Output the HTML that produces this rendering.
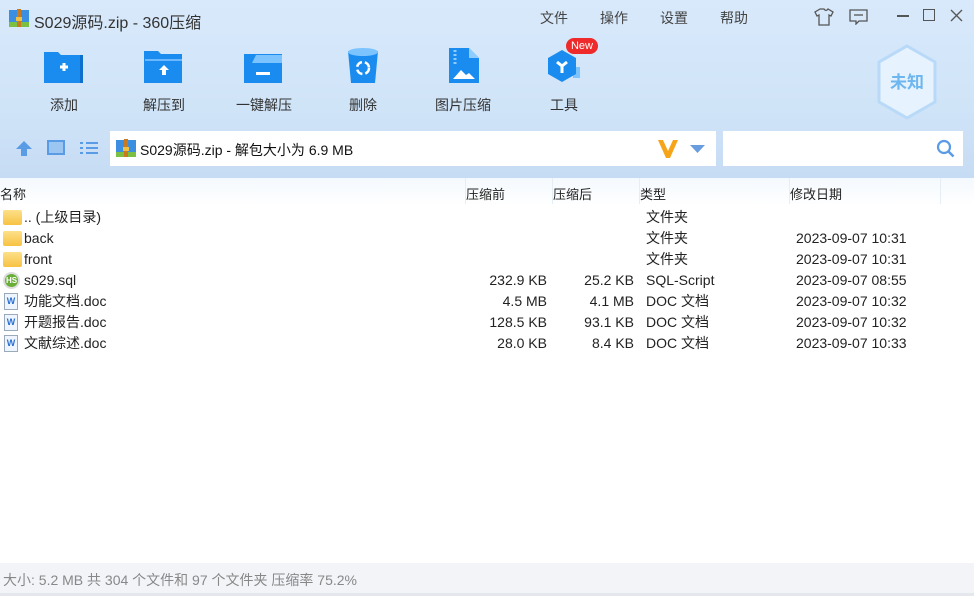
<!DOCTYPE html>
<html><head><meta charset="utf-8"><style>
*{margin:0;padding:0;box-sizing:border-box}
body{width:974px;height:596px;overflow:hidden;font-family:"Liberation Sans","Noto Sans CJK SC",sans-serif;background:#fff;position:relative;font-size:14px;color:#222}
.top{position:absolute;left:0;top:0;width:974px;height:178px;background:linear-gradient(180deg,#d8e9fb 0%,#d0e4f8 60%,#c6dcf4 100%)}
.a{position:absolute;white-space:nowrap}
.tb{position:absolute;top:47px;width:80px;text-align:center;font-size:14px;color:#333}
.tb svg{display:block;margin:0 auto 12px}
.menu{top:8px;font-size:14px;color:#444}
.row{position:absolute;left:0;height:21px;width:974px;font-size:14px;line-height:21px}
.row span{position:absolute;white-space:nowrap}
.r{text-align:right}
</style></head><body>
<div class="top"></div>
<svg class="a" style="left:9px;top:8px" width="20" height="20" viewBox="0 0 20 20"><rect x="0" y="2" width="20" height="16" fill="#3b8ee0"/><rect x="0" y="14" width="20" height="5" fill="#7bc043"/><rect x="8" y="1" width="4" height="18" fill="#c77a1e"/><rect x="7" y="9" width="6" height="4" fill="#f0c040"/></svg>
<div class="a" style="left:34px;top:9px;font-size:16px;color:#333">S029源码.zip - 360压缩</div>
<div class="a menu" style="left:540px">文件</div>
<div class="a menu" style="left:600px">操作</div>
<div class="a menu" style="left:660px">设置</div>
<div class="a menu" style="left:720px">帮助</div>
<svg class="a" style="left:814px;top:8px" width="20" height="18" viewBox="0 0 20 18"><path d="M6 1L1 4l2 4 2-1v10h10V7l2 1 2-4-5-3q-2 3-4 0z" fill="none" stroke="#555" stroke-width="1.3"/></svg>
<svg class="a" style="left:849px;top:9px" width="20" height="16" viewBox="0 0 20 16"><path d="M1 1h17v11H10l-3 3v-3H1z" fill="none" stroke="#555" stroke-width="1.3"/><path d="M5 6h9" stroke="#555" stroke-width="1.3"/></svg>
<div class="a" style="left:897px;top:15px;width:12px;height:1.5px;background:#555"></div>
<div class="a" style="left:923px;top:9px;width:12px;height:12px;border:1.5px solid #555"></div>
<svg class="a" style="left:950px;top:9px" width="13" height="13"><path d="M1 1l11 11M12 1L1 12" stroke="#555" stroke-width="1.3"/></svg>
<div class="tb" style="left:24px"><svg width="40" height="36" viewBox="0 0 40 36"><path d="M0 5h14l3 3h21v28H0z" fill="#1a8cf0"/><rect x="36" y="8" width="3" height="28" fill="#0f6fcc"/><path d="M16 20h8M20 16v8" stroke="#fff" stroke-width="3"/></svg>添加</div>
<div class="tb" style="left:124px"><svg width="40" height="36" viewBox="0 0 40 36"><path d="M0 4h14l3 3h21v29H0z" fill="#1a8cf0"/><path d="M1 13h37" stroke="#6bb8ff" stroke-width="2"/><path d="M20 18l-5 5h3v5h4v-5h3z" fill="#fff"/></svg>解压到</div>
<div class="tb" style="left:224px"><svg width="40" height="36" viewBox="0 0 40 36"><rect x="0" y="7" width="38" height="29" fill="#1a8cf0"/><path d="M12 8h26v8H8z" fill="#7cc4ff"/><rect x="12" y="25" width="14" height="3" fill="#fff"/></svg>一键解压</div>
<div class="tb" style="left:323px"><svg width="40" height="36" viewBox="0 0 40 36"><path d="M5 4h30l-3 32H8z" fill="#1a8cf0"/><ellipse cx="20" cy="5" rx="15" ry="4" fill="#7cc4ff"/><circle cx="20" cy="21" r="6" fill="none" stroke="#fff" stroke-width="2.5" stroke-dasharray="7 3"/></svg>删除</div>
<div class="tb" style="left:423px"><svg width="40" height="36" viewBox="0 0 40 36"><path d="M6 1h20l10 10v25H6z" fill="#1a8cf0"/><path d="M26 1v10h10z" fill="#8fccff"/><path d="M12 3v14" stroke="#8fccff" stroke-width="3" stroke-dasharray="2 2"/><path d="M10 32l8-9 5 5 3-2 6 6z" fill="#fff"/></svg>图片压缩</div>
<div class="tb" style="left:524px"><svg width="40" height="36" viewBox="0 0 40 36"><rect x="29" y="20" width="7" height="11" fill="#7cc4ff"/><path d="M18 3l14 8v16l-14 8-14-8V11z" fill="#1a8cf0"/><path d="M13 15l5 4 5-4M18 19v7" stroke="#fff" stroke-width="3" fill="none"/></svg>工具</div>
<div class="a" style="left:566px;top:38px;width:32px;height:16px;background:#ee2a2a;border-radius:8px;color:#fff;font-size:11px;line-height:16px;text-align:center">New</div>
<svg class="a" style="left:876px;top:44px" width="62" height="76" viewBox="0 0 62 76"><path d="M31 2l28 16v40L31 74 3 58V18z" fill="#e6f2fd" stroke="#b8daf8" stroke-width="3"/><text x="31" y="44" text-anchor="middle" font-size="17" font-weight="bold" fill="#6db6f0" font-family="Noto Sans CJK SC,sans-serif">未知</text></svg>
<svg class="a" style="left:15px;top:140px" width="18" height="16"><path d="M9 1L1 9h5v7h6V9h5z" fill="#5a9be6"/></svg>
<div class="a" style="left:47px;top:140px;width:18px;height:15px;border:2px solid #5a9be6;background:#9cc6f2"></div>
<svg class="a" style="left:80px;top:141px" width="18" height="14"><path d="M0 2h3M6 2h12M0 7h3M6 7h12M0 12h3M6 12h12" stroke="#5a9be6" stroke-width="2"/></svg>
<div class="a" style="left:110px;top:131px;width:606px;height:35px;background:#fff"></div>
<svg class="a" style="left:116px;top:138px" width="20" height="20" viewBox="0 0 20 20"><rect x="0" y="2" width="20" height="16" fill="#3b8ee0"/><rect x="0" y="14" width="20" height="5" fill="#7bc043"/><rect x="8" y="1" width="4" height="18" fill="#c77a1e"/><rect x="7" y="9" width="6" height="4" fill="#f0c040"/></svg>
<div class="a" style="left:140px;top:140px;font-size:14px;color:#111">S029源码.zip - 解包大小为 6.9 MB</div>
<svg class="a" style="left:657px;top:139px" width="22" height="20"><path d="M1 1h5l5 11 5-11h5l-8 18h-4z" fill="#f6a51a"/></svg>
<svg class="a" style="left:690px;top:145px" width="15" height="8"><path d="M0 0h15l-7.5 8z" fill="#6a9de0"/></svg>
<div class="a" style="left:723px;top:131px;width:240px;height:35px;background:#fff"></div>
<svg class="a" style="left:936px;top:139px" width="20" height="20"><circle cx="8" cy="8" r="6" fill="none" stroke="#5a9be6" stroke-width="2.2"/><path d="M12.5 12.5l5 5" stroke="#5a9be6" stroke-width="2.5"/></svg>
<div class="a" style="left:0;top:178px;width:974px;height:28px;background:linear-gradient(180deg,#f4f9fe,#fff)"></div>
<div class="a" style="left:0;top:184px;font-size:13px">名称</div>
<div class="a" style="left:466px;top:184px;font-size:13px">压缩前</div>
<div class="a" style="left:553px;top:184px;font-size:13px">压缩后</div>
<div class="a" style="left:640px;top:184px;font-size:13px">类型</div>
<div class="a" style="left:790px;top:184px;font-size:13px">修改日期</div>
<div class="a" style="left:465px;top:178px;width:1px;height:26px;background:#e6edf5"></div>
<div class="a" style="left:552px;top:178px;width:1px;height:26px;background:#e6edf5"></div>
<div class="a" style="left:639px;top:178px;width:1px;height:26px;background:#e6edf5"></div>
<div class="a" style="left:789px;top:178px;width:1px;height:26px;background:#e6edf5"></div>
<div class="a" style="left:940px;top:178px;width:1px;height:26px;background:#e6edf5"></div>
<div class="row" style="top:207px"><span style="left:3px;top:3px;width:19px;height:15px;background:linear-gradient(#fde08a,#f6c243);border-radius:2px"></span><span style="left:24px">.. (上级目录)</span><span style="left:646px">文件夹</span></div>
<div class="row" style="top:228px"><span style="left:3px;top:3px;width:19px;height:15px;background:linear-gradient(#fde08a,#f6c243);border-radius:2px"></span><span style="left:24px">back</span><span style="left:646px">文件夹</span><span style="left:796px">2023-09-07 10:31</span></div>
<div class="row" style="top:249px"><span style="left:3px;top:3px;width:19px;height:15px;background:linear-gradient(#fde08a,#f6c243);border-radius:2px"></span><span style="left:24px">front</span><span style="left:646px">文件夹</span><span style="left:796px">2023-09-07 10:31</span></div>
<div class="row" style="top:270px"><span style="left:3px;top:2px;width:17px;height:17px;border-radius:50%;background:#6aae3a;color:#fff;font-size:8px;line-height:13px;text-align:center;font-weight:bold;border:2px solid #ddd">HS</span><span style="left:24px">s029.sql</span><span class="r" style="left:440px;width:107px">232.9 KB</span><span class="r" style="left:540px;width:94px">25.2 KB</span><span style="left:646px">SQL-Script</span><span style="left:796px">2023-09-07 08:55</span></div>
<div class="row" style="top:291px"><span style="left:4px;top:2px;width:14px;height:17px;border:1px solid #9ab;background:#eef5ff;color:#2a6fd0;font-size:9px;line-height:15px;text-align:center;font-weight:bold">W</span><span style="left:24px">功能文档.doc</span><span class="r" style="left:440px;width:107px">4.5 MB</span><span class="r" style="left:540px;width:94px">4.1 MB</span><span style="left:646px">DOC 文档</span><span style="left:796px">2023-09-07 10:32</span></div>
<div class="row" style="top:312px"><span style="left:4px;top:2px;width:14px;height:17px;border:1px solid #9ab;background:#eef5ff;color:#2a6fd0;font-size:9px;line-height:15px;text-align:center;font-weight:bold">W</span><span style="left:24px">开题报告.doc</span><span class="r" style="left:440px;width:107px">128.5 KB</span><span class="r" style="left:540px;width:94px">93.1 KB</span><span style="left:646px">DOC 文档</span><span style="left:796px">2023-09-07 10:32</span></div>
<div class="row" style="top:333px"><span style="left:4px;top:2px;width:14px;height:17px;border:1px solid #9ab;background:#eef5ff;color:#2a6fd0;font-size:9px;line-height:15px;text-align:center;font-weight:bold">W</span><span style="left:24px">文献综述.doc</span><span class="r" style="left:440px;width:107px">28.0 KB</span><span class="r" style="left:540px;width:94px">8.4 KB</span><span style="left:646px">DOC 文档</span><span style="left:796px">2023-09-07 10:33</span></div>
<div class="a" style="left:0;top:563px;width:974px;height:30px;background:#f2f4f8"></div>
<div class="a" style="left:0;top:593px;width:974px;height:3px;background:#e4e7ec"></div>
<div class="a" style="left:3px;top:570px;font-size:14px;color:#888">大小: 5.2 MB 共 304 个文件和 97 个文件夹 压缩率 75.2%</div>
</body></html>
